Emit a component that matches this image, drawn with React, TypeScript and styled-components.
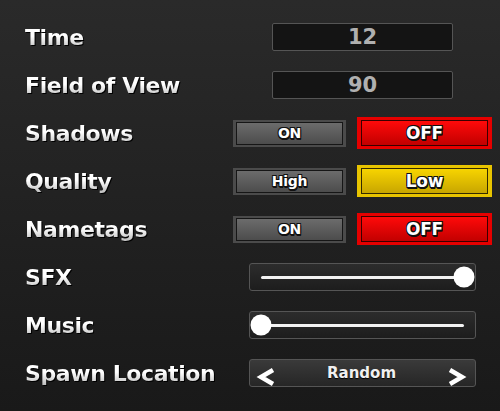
import React from "react";
import styled, { createGlobalStyle } from "styled-components";

const GlobalStyle = createGlobalStyle`
  html, body {
    margin: 0;
    padding: 0;
    background: #1c1c1c;
  }
  body {
    font-family: "DejaVu Sans", "Liberation Sans", sans-serif;
  }
`;

const Panel = styled.div`
  width: 500px;
  height: 411px;
  box-sizing: border-box;
  padding-top: 13px;
  background: linear-gradient(to bottom, #2a2a2a, #191919);
  display: flex;
  flex-direction: column;
`;

const Row = styled.div`
  display: grid;
  grid-template-columns: 225px 275px;
  align-items: center;
  height: 48px;
`;

const Label = styled.div`
  padding-left: 25px;
  font-size: 22px;
  font-weight: bold;
  letter-spacing: -0.4px;
  white-space: nowrap;
  background: linear-gradient(to bottom, #ffffff 45%, #b8b8b8);
  -webkit-background-clip: text;
  background-clip: text;
  -webkit-text-fill-color: transparent;
  filter: drop-shadow(1px 1px 0 #000);
`;

const Control = styled.div`
  display: flex;
  justify-content: center;
  align-items: center;
`;

const ValueBox = styled.div`
  width: 181px;
  height: 28px;
  box-sizing: border-box;
  border: 1px solid #555;
  border-radius: 2px;
  background: #141414;
  color: #b0b0b0;
  font-size: 21px;
  font-weight: bold;
  display: flex;
  align-items: center;
  justify-content: center;
`;

const ToggleGroup = styled.div`
  display: flex;
  align-items: center;
  gap: 11px;
`;

const tones = {
  off: { frame: "#4b4b4b", top: "#6c6c6c", bottom: "#4c4c4c", line: "#161616" },
  red: { frame: "#e60000", top: "#ff0a0a", bottom: "#c20000", line: "#3a0000" },
  yellow: { frame: "#e8c400", top: "#f7d400", bottom: "#c8a600", line: "#332a00" },
};

type Tone = keyof typeof tones;

const Toggle = styled.div<{ $tone: Tone }>`
  box-sizing: border-box;
  width: ${(p) => (p.$tone === "off" ? 113 : 135)}px;
  height: ${(p) => (p.$tone === "off" ? 27 : 32)}px;
  padding: ${(p) => (p.$tone === "off" ? "2px 3px" : "3px 4px")};
  background: ${(p) => tones[p.$tone].frame};
  display: flex;
`;

const ToggleFace = styled.div<{ $tone: Tone }>`
  flex: 1;
  box-sizing: border-box;
  border: 1px solid ${(p) => tones[p.$tone].line};
  background: linear-gradient(
    to bottom,
    ${(p) => tones[p.$tone].top},
    ${(p) => tones[p.$tone].bottom}
  );
  display: flex;
  align-items: center;
  justify-content: center;
  color: #fff;
  font-weight: bold;
  font-size: ${(p) => (p.$tone === "off" ? 14 : 17)}px;
  letter-spacing: -0.3px;
  text-shadow: -1px -1px 0 #111, 1px -1px 0 #111, -1px 1px 0 #111,
    1px 1px 0 #111, 0 2px 0 #111, 1px 2px 0 #111;
`;

const Well = styled.div<{ $width: number }>`
  width: ${(p) => p.$width}px;
  height: 28px;
  box-sizing: border-box;
  border: 1px solid #555;
  border-radius: 3px;
  background: linear-gradient(to bottom, #2c2c2c, #1d1d1d);
  display: flex;
  align-items: center;
`;

const Track = styled.div`
  position: relative;
  flex: 1;
  height: 3px;
  margin: 0 11px;
  background: #f2f2f2;
  border-radius: 2px;
`;

const Thumb = styled.div`
  position: absolute;
  top: 50%;
  width: 21px;
  height: 21px;
  border-radius: 50%;
  background: #fff;
  transform: translate(-50%, -50%);
`;

const Picker = styled(Well)`
  justify-content: space-between;
  padding: 0 9px 0 7px;
  background: linear-gradient(to bottom, #3a3a3a, #262626);
`;

const PickerText = styled.span`
  color: #f0f0f0;
  font-size: 15px;
  font-weight: bold;
  text-shadow: 0 1px 1px #000;
`;

const Arrow = styled.svg`
  width: 19px;
  height: 20px;
  margin-top: 8px;
  overflow: visible;
`;

const Slider = ({ value }: { value: number }) => (
  <Well $width={227}>
    <Track>
      <Thumb style={{ left: `${value}%` }} />
    </Track>
  </Well>
);

const Switch = ({
  left,
  right,
  active,
  tone,
}: {
  left: string;
  right: string;
  active: "left" | "right";
  tone: Tone;
}) => (
  <ToggleGroup>
    <Toggle $tone={active === "left" ? tone : "off"}>
      <ToggleFace $tone={active === "left" ? tone : "off"}>{left}</ToggleFace>
    </Toggle>
    <Toggle $tone={active === "right" ? tone : "off"}>
      <ToggleFace $tone={active === "right" ? tone : "off"}>{right}</ToggleFace>
    </Toggle>
  </ToggleGroup>
);

const App = () => {
  return (
    <>
      <GlobalStyle />
      <Panel>
        <Row>
          <Label>Time</Label>
          <Control>
            <ValueBox>12</ValueBox>
          </Control>
        </Row>
        <Row>
          <Label>Field of View</Label>
          <Control>
            <ValueBox>90</ValueBox>
          </Control>
        </Row>
        <Row>
          <Label>Shadows</Label>
          <Control>
            <Switch left="ON" right="OFF" active="right" tone="red" />
          </Control>
        </Row>
        <Row>
          <Label>Quality</Label>
          <Control>
            <Switch left="High" right="Low" active="right" tone="yellow" />
          </Control>
        </Row>
        <Row>
          <Label>Nametags</Label>
          <Control>
            <Switch left="ON" right="OFF" active="right" tone="red" />
          </Control>
        </Row>
        <Row>
          <Label>SFX</Label>
          <Control>
            <Slider value={100} />
          </Control>
        </Row>
        <Row>
          <Label>Music</Label>
          <Control>
            <Slider value={0} />
          </Control>
        </Row>
        <Row>
          <Label>Spawn Location</Label>
          <Control>
            <Picker $width={227}>
              <Arrow viewBox="0 0 19 20">
                <polyline
                  points="16,3 4,10 16,17"
                  fill="none"
                  stroke="#fff"
                  strokeWidth="4.5"
                />
              </Arrow>
              <PickerText>Random</PickerText>
              <Arrow viewBox="0 0 19 20">
                <polyline
                  points="3,3 15,10 3,17"
                  fill="none"
                  stroke="#fff"
                  strokeWidth="4.5"
                />
              </Arrow>
            </Picker>
          </Control>
        </Row>
      </Panel>
    </>
  );
};

export default App;
